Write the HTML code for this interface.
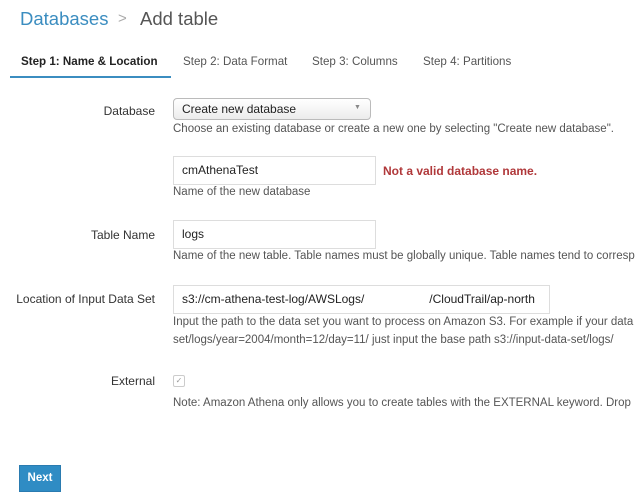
<!DOCTYPE html>
<html><head><style>
body{margin:0;width:640px;height:500px;overflow:hidden;background:#fff;font-family:"Liberation Sans",sans-serif;color:#444;position:relative}
.a{position:absolute;white-space:nowrap}
.lbl{position:absolute;right:485px;font-size:12px;color:#333}
.help{font-size:11.5px;color:#555}
.inp{position:absolute;border:1px solid #ddd;background:#fff;box-sizing:border-box;font-size:12px;color:#222;padding-left:8px;line-height:26px;overflow:hidden;white-space:nowrap}
.tab{position:absolute;top:55px;font-size:11.6px;color:#555}
</style></head><body>
<div class="a" style="left:20px;top:8px;font-size:18.5px;color:#3b8dc0">Databases</div>
<div class="a" style="left:118px;top:10px;font-size:15px;color:#aaa">&gt;</div>
<div class="a" style="left:140px;top:8px;font-size:18.5px;color:#555">Add table</div>
<div class="tab" style="left:21px;font-weight:bold;color:#222">Step 1: Name &amp; Location</div>
<div class="tab" style="left:183px">Step 2: Data Format</div>
<div class="tab" style="left:312px">Step 3: Columns</div>
<div class="tab" style="left:423px">Step 4: Partitions</div>
<div class="a" style="left:10px;top:76px;width:161px;height:2px;background:#3b8dc0"></div>

<div class="lbl" style="top:104px">Database</div>
<div class="a" style="left:173px;top:98px;width:198px;height:22px;border:1px solid #bbb;border-radius:4px;box-sizing:border-box;background:linear-gradient(#fff,#ececec);font-size:12px;color:#222;padding:3px 0 0 8px">Create new database<span style="position:absolute;left:180px;top:5px;font-size:7px;color:#888">▼</span></div>
<div class="a help" style="left:173px;top:123px">Choose an existing database or create a new one by selecting "Create new database".</div>

<div class="inp" style="left:173px;top:156px;width:203px;height:29px">cmAthenaTest</div>
<div class="a" style="left:383px;top:164px;font-size:12px;font-weight:bold;color:#b0383a">Not a valid database name.</div>
<div class="a help" style="left:173px;top:186px">Name of the new database</div>

<div class="lbl" style="top:228px">Table Name</div>
<div class="inp" style="left:173px;top:220px;width:203px;height:29px">logs</div>
<div class="a help" style="left:173px;top:250px">Name of the new table. Table names must be globally unique. Table names tend to corresp</div>

<div class="lbl" style="top:292px">Location of Input Data Set</div>
<div class="inp" style="left:173px;top:285px;width:377px;height:29px">s3://cm-athena-test-log/AWSLogs/<span style="display:inline-block;width:65px"></span>/CloudTrail/ap-north</div>
<div class="a help" style="left:173px;top:316px">Input the path to the data set you want to process on Amazon S3. For example if your data</div>
<div class="a help" style="left:173px;top:334px">set/logs/year=2004/month=12/day=11/ just input the base path s3://input-data-set/logs/</div>

<div class="lbl" style="top:374px">External</div>
<div class="a" style="left:173px;top:375px;width:10px;height:10px;border:1px solid #ccc;border-radius:2px;font-size:8px;color:#999;text-align:center;line-height:10px">✓</div>
<div class="a help" style="left:173px;top:397px">Note: Amazon Athena only allows you to create tables with the EXTERNAL keyword. Drop</div>

<div class="a" style="left:19px;top:465px;width:42px;height:27px;background:#2f8cc4;border:1px solid #2a7bb0;box-sizing:border-box;color:#fff;font-size:11.5px;font-weight:bold;text-align:center;line-height:25px">Next</div>
</body></html>
